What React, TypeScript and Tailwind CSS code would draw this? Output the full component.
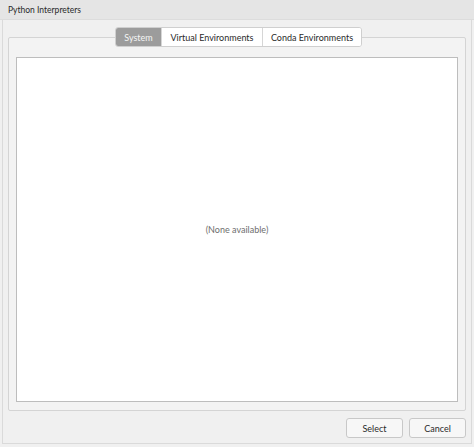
import { useState } from "react";

const TABS = ["System", "Virtual Environments", "Conda Environments"];

export default function App() {
  const [tab, setTab] = useState(0);

  return (
    <div
      className="flex h-[447px] w-[474px] flex-col bg-[#f0f0f0] text-[9px] text-[#1e1e1e]"
      style={{ fontFamily: 'Lato, "Open Sans", sans-serif' }}
    >
      <div className="flex h-[20px] shrink-0 items-center border-b border-[#dcdcdc] bg-[#e5e5e5] pl-[8px] pt-[2px] text-[8.5px] text-[#2a2a2a]">
        Python Interpreters
      </div>
      <div className="mx-[2px] mb-[3px] flex flex-1 flex-col border-x border-b border-[#dadada]">
        <div className="relative mx-[5px] mt-[17px] flex h-[374px] flex-col rounded-[2px] border border-[#d4d4d4] bg-[#f3f3f3] px-[7px] pb-[8px] pt-[19px]">
          <div className="absolute left-[106px] top-[-11px] flex h-[20px] overflow-hidden rounded-[3px] border border-[#cfcfcf] bg-white">
            {TABS.map((t, i) => (
              <button
                key={t}
                onClick={() => setTab(i)}
                className={
                  i === tab
                    ? "w-[45px] bg-[#9c9c9c] pt-[1px] text-[#f4f4f4]"
                    : i === 1
                      ? "w-[101px] border-l border-[#d6d6d6] bg-white pt-[1px] text-[#2a2a2a]"
                      : "w-[99px] border-l border-[#d6d6d6] bg-white pt-[1px] text-[#2a2a2a]"
                }
              >
                {t}
              </button>
            ))}
          </div>
          <div className="flex flex-1 items-center justify-center border border-[#bdbdbd] bg-white text-[#6e6e6e]">
            (None available)
          </div>
        </div>
        <div className="flex justify-end gap-[6px] pr-[5px] pt-[7px]">
          <button className="h-[20px] w-[57px] rounded-[3px] border border-[#c8c8c8] bg-[#f7f7f7] pt-[1px] text-[#2a2a2a]">
            Select
          </button>
          <button className="h-[20px] w-[57px] rounded-[3px] border border-[#c8c8c8] bg-[#f7f7f7] pt-[1px] text-[#2a2a2a]">
            Cancel
          </button>
        </div>
      </div>
    </div>
  );
}
